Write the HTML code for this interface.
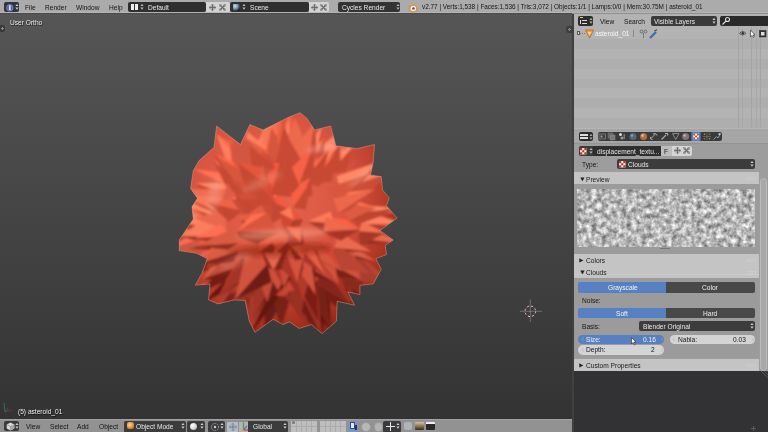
<!DOCTYPE html>
<html><head><meta charset="utf-8">
<style>
*{margin:0;padding:0;box-sizing:border-box}
html,body{width:768px;height:432px;overflow:hidden;background:#323234}
body{position:relative;font-family:"Liberation Sans",sans-serif;font-size:6.6px;color:#151515}
.a{position:absolute}
.t{position:absolute;white-space:nowrap;line-height:1;will-change:transform}
.dd{position:absolute;background:#3a3a3a;border-radius:2px}
.lt{color:#e6e6e6}
</style></head><body>

<!-- top info bar -->
<div class="a" style="left:0;top:0;width:768px;height:13px;background:#ababab"></div><div class="a" style="left:0;top:12px;width:768px;height:1px;background:#b6b6b6"></div>


<!-- ===== TOP BAR CONTENT ===== -->
<div class="a" style="left:4px;top:2px;width:15px;height:10px;background:#2e3340;border-radius:2px"></div>
<svg class="a" style="left:6px;top:3.5px" width="8" height="8"><circle cx="3.8" cy="3.8" r="3.3" fill="#5060a0" stroke="#8a9ad0" stroke-width=".7"/><rect x="2.9" y="1.3" width="1.8" height="5" fill="#d8e0f4"/></svg>
<svg class="a" style="left:15.0px;top:3.3px" width="4" height="8"><path d="M0.4 3 L2 0.9 L3.6 3Z M0.4 4.6 L2 6.7 L3.6 4.6Z" fill="#ccc"/></svg>
<div class="t" style="left:25px;top:5px">File</div>
<div class="t" style="left:45px;top:5px">Render</div>
<div class="t" style="left:75.5px;top:5px">Window</div>
<div class="t" style="left:108.5px;top:5px">Help</div>

<div class="dd" style="left:128px;top:2px;width:78px;height:10px;background:#2f2f2f"></div>
<div class="a" style="left:131px;top:4px;width:3px;height:6px;background:#eee"></div>
<div class="a" style="left:135px;top:4px;width:3px;height:3px;background:#eee"></div>
<div class="a" style="left:135px;top:7px;width:3px;height:3px;background:#eee"></div>
<svg class="a" style="left:139.5px;top:3.3px" width="4" height="8"><path d="M0.4 3 L2 0.9 L3.6 3Z M0.4 4.6 L2 6.7 L3.6 4.6Z" fill="#bbb"/></svg>
<div class="t lt" style="left:148px;top:5px">Default</div>
<div class="a" style="left:206px;top:2px;width:24px;height:10px;background:#d4d4d4;border-radius:0 2px 2px 0"></div>
<svg class="a" style="left:209px;top:4px" width="7" height="7"><path d="M3.5 0.5 L3.5 6.5 M0.5 3.5 L6.5 3.5" stroke="#6a6a6a" stroke-width="1.3"/><path d="M2.3 1.4 L3.5 0.2 L4.7 1.4 M2.3 5.6 L3.5 6.8 L4.7 5.6 M1.4 2.3 L0.2 3.5 L1.4 4.7 M5.6 2.3 L6.8 3.5 L5.6 4.7" stroke="#6a6a6a" stroke-width=".8" fill="none"/></svg>
<svg class="a" style="left:219px;top:4px" width="7" height="7"><path d="M1.5 1.5 L5.5 5.5 M5.5 1.5 L1.5 5.5" stroke="#6a6a6a" stroke-width="1.2"/><circle cx="1.3" cy="1.3" r="1" fill="none" stroke="#6a6a6a" stroke-width=".7"/><circle cx="5.7" cy="1.3" r="1" fill="none" stroke="#6a6a6a" stroke-width=".7"/><circle cx="1.3" cy="5.7" r="1" fill="none" stroke="#6a6a6a" stroke-width=".7"/><circle cx="5.7" cy="5.7" r="1" fill="none" stroke="#6a6a6a" stroke-width=".7"/></svg>

<div class="dd" style="left:230px;top:2px;width:79px;height:10px;background:#2f2f2f"></div>
<div class="a" style="left:233px;top:3.5px;width:7px;height:7px;background:radial-gradient(circle at 30% 30%,#cfe6ef,#5f8aa0 45%,#222 75%)"></div>
<svg class="a" style="left:241.5px;top:3.3px" width="4" height="8"><path d="M0.4 3 L2 0.9 L3.6 3Z M0.4 4.6 L2 6.7 L3.6 4.6Z" fill="#bbb"/></svg>
<div class="t lt" style="left:250px;top:5px">Scene</div>
<div class="a" style="left:309px;top:2px;width:20px;height:10px;background:#d4d4d4;border-radius:0 2px 2px 0"></div>
<svg class="a" style="left:311px;top:4px" width="7" height="7"><path d="M3.5 0.5 L3.5 6.5 M0.5 3.5 L6.5 3.5" stroke="#6a6a6a" stroke-width="1.3"/><path d="M2.3 1.4 L3.5 0.2 L4.7 1.4 M2.3 5.6 L3.5 6.8 L4.7 5.6 M1.4 2.3 L0.2 3.5 L1.4 4.7 M5.6 2.3 L6.8 3.5 L5.6 4.7" stroke="#6a6a6a" stroke-width=".8" fill="none"/></svg>
<svg class="a" style="left:319.5px;top:4px" width="7" height="7"><path d="M1.5 1.5 L5.5 5.5 M5.5 1.5 L1.5 5.5" stroke="#6a6a6a" stroke-width="1.2"/><circle cx="1.3" cy="1.3" r="1" fill="none" stroke="#6a6a6a" stroke-width=".7"/><circle cx="5.7" cy="1.3" r="1" fill="none" stroke="#6a6a6a" stroke-width=".7"/><circle cx="1.3" cy="5.7" r="1" fill="none" stroke="#6a6a6a" stroke-width=".7"/><circle cx="5.7" cy="5.7" r="1" fill="none" stroke="#6a6a6a" stroke-width=".7"/></svg>

<div class="dd" style="left:338px;top:2px;width:62px;height:10px;background:#333"></div>
<div class="t lt" style="left:341.5px;top:5px">Cycles Render</div>
<svg class="a" style="left:395.5px;top:3.3px" width="4" height="8"><path d="M0.4 3 L2 0.9 L3.6 3Z M0.4 4.6 L2 6.7 L3.6 4.6Z" fill="#bbb"/></svg>

<svg class="a" style="left:407px;top:2.5px" width="11" height="10"><path d="M1 3 L5 3 M1.5 5.5 L4 4.5 M2.5 8 L5 6" stroke="#e09040" stroke-width="1.1"/><circle cx="6.3" cy="5.5" r="3.4" fill="#f6f0e6" stroke="#e0903c" stroke-width="1.2"/><circle cx="6.5" cy="5.5" r="1.3" fill="#4a5a7a"/></svg>
<div class="t" style="left:422px;top:4px;font-size:6.4px;top:4.2px">v2.77 | Verts:1,538 | Faces:1,536 | Tris:3,072 | Objects:1/1 | Lamps:0/0 | Mem:30.75M | asteroid_01</div>

<!-- viewport -->
<div class="a" id="vp" style="left:0;top:13px;width:573px;height:406px;background:linear-gradient(#565656,#333333)"></div>
<div class="a" style="left:0;top:13px;width:573px;height:1px;background:#4a4a4a"></div>
<div class="a" style="left:572px;top:13px;width:2px;height:419px;background:#404040"></div>

<!-- viewport header -->
<div class="a" style="left:0;top:419px;width:572px;height:13px;background:#929292"></div><div class="a" style="left:0;top:419px;width:572px;height:1px;background:#a2a2a2"></div>

<!-- ===== VIEWPORT CONTENT ===== -->
<!-- AST --><svg class="a" style="left:0;top:0" width="573" height="419" viewBox="0 0 573 419">
<defs>
<radialGradient id="ag" cx="0.42" cy="0.36" r="0.72"><stop offset="0" stop-color="#e86850"/><stop offset="0.5" stop-color="#d85440"/><stop offset="0.78" stop-color="#b03624"/><stop offset="1" stop-color="#842012"/></radialGradient>
<clipPath id="ac"><polygon points="300.0,112.7 306.6,118.0 314.6,130.0 330.6,126.0 335.9,146.0 357.2,148.6 374.5,144.6 373.2,162.0 370.5,175.2 381.2,176.6 382.5,190.0 389.2,197.9 386.5,205.8 397.1,218.0 379.8,230.6 393.2,240.0 385.2,245.3 386.5,254.6 375.8,258.6 381.2,269.3 373.2,283.9 359.9,285.2 359.9,294.5 347.9,291.9 354.5,305.2 337.2,301.2 336.4,321.2 322.0,333.6 311.6,324.5 299.2,328.4 289.5,321.9 283.0,324.5 273.2,319.3 255.0,332.3 249.1,320.6 245.2,300.4 233.9,299.9 217.9,303.9 208.6,299.9 210.0,283.9 195.3,285.2 202.0,273.2 207.3,258.6 196.6,253.3 179.3,250.6 179.3,240.0 193.3,219.2 192.0,206.7 197.5,198.3 190.6,188.6 193.3,170.6 198.9,160.8 214.0,147.3 216.6,126.0 240.5,144.6 249.9,124.6 263.2,130.0 287.0,118.0"/></clipPath>
<filter id="bl" x="-5%" y="-5%" width="110%" height="110%"><feGaussianBlur stdDeviation="0.9"/></filter><filter id="bl2" x="-20%" y="-20%" width="140%" height="140%"><feGaussianBlur stdDeviation="2.5"/></filter>
</defs>
<polygon points="300.0,112.7 306.6,118.0 314.6,130.0 330.6,126.0 335.9,146.0 357.2,148.6 374.5,144.6 373.2,162.0 370.5,175.2 381.2,176.6 382.5,190.0 389.2,197.9 386.5,205.8 397.1,218.0 379.8,230.6 393.2,240.0 385.2,245.3 386.5,254.6 375.8,258.6 381.2,269.3 373.2,283.9 359.9,285.2 359.9,294.5 347.9,291.9 354.5,305.2 337.2,301.2 336.4,321.2 322.0,333.6 311.6,324.5 299.2,328.4 289.5,321.9 283.0,324.5 273.2,319.3 255.0,332.3 249.1,320.6 245.2,300.4 233.9,299.9 217.9,303.9 208.6,299.9 210.0,283.9 195.3,285.2 202.0,273.2 207.3,258.6 196.6,253.3 179.3,250.6 179.3,240.0 193.3,219.2 192.0,206.7 197.5,198.3 190.6,188.6 193.3,170.6 198.9,160.8 214.0,147.3 216.6,126.0 240.5,144.6 249.9,124.6 263.2,130.0 287.0,118.0" fill="url(#ag)"/>
<g clip-path="url(#ac)"><g filter="url(#bl)">
<polygon points="168.9,200.8 210.2,216.4 212.2,218.2" fill="#c44630"/>
<polygon points="289.6,112.2 289.4,146.3 277.9,148.8" fill="#ff7253"/>
<polygon points="320.7,318.2 302.4,297.5 306.4,299.1" fill="#63160f"/>
<polygon points="320.7,318.2 325.6,292.3 326.5,289.0" fill="#63160f"/>
<polygon points="289.6,112.2 304.4,148.7 289.4,146.3" fill="#ed6044"/>
<polygon points="185.9,240.4 212.8,247.6 215.8,253.6" fill="#962e20"/>
<polygon points="272.9,97.7 276.1,148.2 269.1,150.0" fill="#fd6649"/>
<polygon points="185.9,240.4 209.4,218.6 210.0,227.6" fill="#ff7456"/>
<polygon points="290.2,120.9 298.6,148.8 288.0,147.5" fill="#db543c"/>
<polygon points="168.9,200.8 214.9,199.3 210.2,216.4" fill="#ff8c69"/>
<polygon points="201.9,303.6 229.6,275.3 239.6,283.7" fill="#691911"/>
<polygon points="201.9,303.6 222.9,265.9 229.6,275.3" fill="#b93b2b"/>
<polygon points="392.1,172.1 355.3,188.5 348.2,176.7" fill="#ff8967"/>
<polygon points="392.1,172.1 360.4,201.1 355.3,188.5" fill="#c94a34"/>
<polygon points="272.9,97.7 288.3,147.4 276.1,148.2" fill="#f26b4e"/>
<polygon points="290.2,120.9 288.0,147.5 278.6,147.8" fill="#ff8664"/>
<polygon points="354.6,141.7 339.9,169.5 336.1,165.6" fill="#c74832"/>
<polygon points="268.4,106.7 265.2,150.4 258.7,151.7" fill="#ff694b"/>
<polygon points="361.7,327.2 323.0,293.6 345.5,276.5" fill="#6d1c14"/>
<polygon points="264.9,332.9 264.1,296.7 265.2,297.3" fill="#7f1d14"/>
<polygon points="273.9,117.4 291.7,146.9 288.9,147.2" fill="#d94f37"/>
<polygon points="163.6,232.6 210.3,219.1 211.4,236.8" fill="#ec7154"/>
<polygon points="185.9,240.4 210.0,227.6 212.8,247.6" fill="#e5654b"/>
<polygon points="264.5,126.8 283.1,146.8 266.7,149.7" fill="#ff7556"/>
<polygon points="354.6,141.7 336.1,165.6 328.8,160.1" fill="#ff8966"/>
<polygon points="264.5,126.8 266.7,149.7 253.1,153.8" fill="#ff805f"/>
<polygon points="251.2,322.9 262.0,296.5 280.1,302.2" fill="#63160f"/>
<polygon points="190.1,194.6 213.5,200.9 209.8,216.7" fill="#d14f38"/>
<polygon points="216.4,134.1 250.4,156.3 242.3,161.7" fill="#ff6a4c"/>
<polygon points="190.1,194.6 218.5,188.0 213.5,200.9" fill="#ff8a67"/>
<polygon points="268.4,106.7 291.2,146.4 281.9,147.7" fill="#f3684c"/>
<polygon points="351.0,119.4 321.8,155.8 315.1,152.2" fill="#ff7c5b"/>
<polygon points="394.4,220.8 363.2,230.1 362.7,214.2" fill="#c24c36"/>
<polygon points="320.7,318.2 306.4,299.1 325.6,292.3" fill="#631710"/>
<polygon points="268.4,106.7 281.9,147.7 265.2,150.4" fill="#ff8363"/>
<polygon points="264.9,332.9 265.2,297.3 282.2,300.6" fill="#691b13"/>
<polygon points="351.0,119.4 339.5,166.9 321.8,155.8" fill="#da583f"/>
<polygon points="273.9,117.4 276.6,148.6 264.8,150.2" fill="#ff6c4e"/>
<polygon points="251.2,322.9 244.8,290.2 262.0,296.5" fill="#6c1b13"/>
<polygon points="216.4,134.1 242.3,161.7 230.1,171.5" fill="#ff7e5e"/>
<polygon points="193.3,295.6 220.3,261.9 225.0,267.9" fill="#c94734"/>
<polygon points="193.3,295.6 225.0,267.9 232.7,278.0" fill="#721d14"/>
<polygon points="350.8,128.8 337.3,166.4 322.3,156.4" fill="#f06f52"/>
<polygon points="273.9,117.4 288.9,147.2 276.6,148.6" fill="#f26448"/>
<polygon points="262.1,124.8 276.6,147.9 275.1,149.7" fill="#d84e36"/>
<polygon points="408.2,244.4 360.6,243.9 360.8,238.4" fill="#9c3122"/>
<polygon points="247.2,130.8 259.8,154.2 247.2,158.5" fill="#f66649"/>
<polygon points="408.2,244.4 360.8,238.4 363.2,226.8" fill="#ea6b50"/>
<polygon points="188.2,211.5 212.5,222.0 209.6,227.0" fill="#b8402c"/>
<polygon points="295.4,118.2 308.3,149.7 281.7,148.3" fill="#ee674b"/>
<polygon points="358.2,322.5 334.9,281.0 336.3,283.1" fill="#6b1810"/>
<polygon points="261.4,111.6 279.8,147.5 279.9,149.4" fill="#cf4b34"/>
<polygon points="194.5,184.0 220.4,187.2 218.5,195.3" fill="#ff7d5c"/>
<polygon points="368.8,298.9 349.8,264.9 354.0,263.5" fill="#822217"/>
<polygon points="353.5,146.4 334.5,167.6 325.2,156.5" fill="#ff8967"/>
<polygon points="321.9,126.5 320.2,154.8 315.9,156.1" fill="#c74832"/>
<polygon points="194.5,184.0 218.5,195.3 213.7,203.5" fill="#c94b35"/>
<polygon points="353.5,146.4 345.6,174.2 334.5,167.6" fill="#c84832"/>
<polygon points="188.2,211.5 214.1,196.3 215.2,202.7" fill="#ff7f5d"/>
<polygon points="368.8,298.9 329.6,289.7 336.5,279.4" fill="#681811"/>
<polygon points="247.2,130.8 267.2,150.6 259.8,154.2" fill="#ff7c5c"/>
<polygon points="410.4,225.2 362.3,234.9 361.2,223.7" fill="#af3c2a"/>
<polygon points="410.4,225.2 361.2,223.7 362.5,210.8" fill="#ff8060"/>
<polygon points="262.1,124.8 275.1,149.7 262.4,153.5" fill="#fc795a"/>
<polygon points="247.1,132.1 246.3,162.7 240.1,160.6" fill="#fa5e43"/>
<polygon points="358.2,322.5 321.1,292.1 334.9,281.0" fill="#82251b"/>
<polygon points="346.5,307.3 319.5,293.3 335.6,279.6" fill="#782017"/>
<polygon points="280.8,328.5 290.7,297.2 289.7,300.7" fill="#63160f"/>
<polygon points="221.1,314.8 245.7,284.4 255.3,294.6" fill="#63160f"/>
<polygon points="343.0,129.1 325.6,161.3 317.8,154.9" fill="#ff8665"/>
<polygon points="343.0,129.1 335.1,165.4 325.6,161.3" fill="#c94b35"/>
<polygon points="261.4,111.6 279.9,149.4 264.0,153.0" fill="#f67759"/>
<polygon points="321.9,126.5 315.9,156.1 302.8,150.4" fill="#ff8565"/>
<polygon points="172.4,222.1 213.5,227.3 211.7,239.5" fill="#ad3b29"/>
<polygon points="170.8,245.9 216.0,240.6 215.2,251.4" fill="#982f20"/>
<polygon points="275.0,121.7 289.3,148.7 270.9,151.9" fill="#f37053"/>
<polygon points="192.2,261.6 215.5,242.8 222.6,263.8" fill="#9f3728"/>
<polygon points="172.4,222.1 212.6,203.1 213.5,227.3" fill="#ff8464"/>
<polygon points="188.2,211.5 215.2,202.7 212.5,222.0" fill="#f27052"/>
<polygon points="367.4,318.8 330.1,285.2 335.8,279.4" fill="#792017"/>
<polygon points="367.4,318.8 335.8,279.4 343.1,274.1" fill="#962e22"/>
<polygon points="221.1,314.8 230.7,275.5 245.7,284.4" fill="#a73628"/>
<polygon points="368.8,298.9 336.5,279.4 349.8,264.9" fill="#892b1f"/>
<polygon points="385.3,233.0 359.9,246.1 359.1,231.3" fill="#a53726"/>
<polygon points="170.8,245.9 211.2,225.0 216.0,240.6" fill="#f8775a"/>
<polygon points="211.5,318.9 251.2,287.7 251.5,292.8" fill="#63160f"/>
<polygon points="385.3,233.0 359.1,231.3 361.7,220.9" fill="#f47154"/>
<polygon points="247.1,132.1 271.1,150.4 246.3,162.7" fill="#ff8262"/>
<polygon points="194.2,169.1 228.7,173.8 226.8,185.8" fill="#ff7555"/>
<polygon points="167.3,250.5 209.7,226.6 215.9,233.1" fill="#fd694d"/>
<polygon points="180.7,236.2 218.2,236.1 212.6,245.5" fill="#a03323"/>
<polygon points="394.3,284.9 353.9,249.4 359.3,252.7" fill="#a93022"/>
<polygon points="280.8,328.5 271.5,295.4 290.7,297.2" fill="#782118"/>
<polygon points="229.4,139.3 241.0,169.7 232.7,169.9" fill="#da5139"/>
<polygon points="211.5,318.9 229.2,272.3 240.2,278.2" fill="#b23b2c"/>
<polygon points="330.7,329.3 324.6,284.2 329.3,287.5" fill="#63160f"/>
<polygon points="213.9,153.3 239.9,164.9 238.2,173.7" fill="#ff6649"/>
<polygon points="325.2,344.4 299.7,297.1 318.7,289.4" fill="#972f22"/>
<polygon points="172.6,274.0 223.7,258.1 226.4,268.8" fill="#812419"/>
<polygon points="213.9,153.3 238.2,173.7 224.2,181.7" fill="#cc4d37"/>
<polygon points="194.2,169.1 226.8,185.8 219.1,196.0" fill="#dc5c42"/>
<polygon points="192.0,208.4 218.2,217.3 210.8,219.8" fill="#bf432f"/>
<polygon points="196.2,182.9 224.5,193.2 213.8,205.6" fill="#c94a34"/>
<polygon points="330.7,329.3 297.7,300.0 306.4,291.1" fill="#63160f"/>
<polygon points="323.8,339.6 293.2,302.0 296.2,294.1" fill="#63160f"/>
<polygon points="373.1,273.5 349.9,252.3 357.8,249.7" fill="#ac3425"/>
<polygon points="175.4,189.3 218.0,213.0 211.2,210.0" fill="#c74832"/>
<polygon points="211.5,318.9 240.2,278.2 251.2,287.7" fill="#7e241a"/>
<polygon points="202.0,280.8 230.0,263.7 234.0,276.5" fill="#781f16"/>
<polygon points="172.6,274.0 216.5,242.3 223.7,258.1" fill="#c4503b"/>
<polygon points="180.7,236.2 212.8,212.1 218.2,236.1" fill="#f97d5e"/>
<polygon points="202.0,280.8 218.7,251.7 230.0,263.7" fill="#d25640"/>
<polygon points="355.6,319.8 330.5,277.1 341.2,276.4" fill="#791d14"/>
<polygon points="167.3,250.5 215.9,233.1 220.7,254.4" fill="#cd5740"/>
<polygon points="196.2,182.9 226.4,183.3 224.5,193.2" fill="#ff8766"/>
<polygon points="276.9,126.5 288.4,149.9 286.8,154.8" fill="#ca4933"/>
<polygon points="192.0,208.4 217.8,201.2 218.2,217.3" fill="#ff8564"/>
<polygon points="354.9,304.4 335.2,273.4 341.1,275.1" fill="#852117"/>
<polygon points="373.1,273.5 341.0,273.5 349.9,252.3" fill="#84281c"/>
<polygon points="229.4,139.3 259.0,158.8 241.0,169.7" fill="#ef6e51"/>
<polygon points="306.9,323.5 309.6,289.0 315.7,293.0" fill="#63160f"/>
<polygon points="394.3,284.9 340.2,273.7 353.9,249.4" fill="#b44533"/>
<polygon points="355.6,319.8 315.6,292.1 330.5,277.1" fill="#761f16"/>
<polygon points="276.9,126.5 276.1,156.0 266.7,154.7" fill="#f87153"/>
<polygon points="323.8,339.6 313.5,286.9 323.0,289.1" fill="#651710"/>
<polygon points="213.1,160.5 238.5,169.2 234.9,180.9" fill="#fc6c4e"/>
<polygon points="213.1,160.5 234.9,180.9 225.3,185.2" fill="#c94a34"/>
<polygon points="393.2,212.2 361.1,223.1 354.0,217.5" fill="#bc412d"/>
<polygon points="330.7,329.3 306.4,291.1 324.6,284.2" fill="#762017"/>
<polygon points="177.8,272.2 214.8,243.0 225.2,251.3" fill="#e96047"/>
<polygon points="171.6,193.1 220.1,211.6 214.0,212.8" fill="#c74832"/>
<polygon points="354.9,304.4 322.9,286.1 335.2,273.4" fill="#9a3225"/>
<polygon points="300.8,317.3 287.1,297.4 288.6,291.5" fill="#6a1810"/>
<polygon points="306.9,323.5 283.8,295.7 309.6,289.0" fill="#952f22"/>
<polygon points="276.9,126.5 286.8,154.8 276.1,156.0" fill="#ee6e51"/>
<polygon points="393.2,212.2 354.0,217.5 357.2,202.1" fill="#ff8d6b"/>
<polygon points="381.8,284.3 335.7,276.8 353.2,247.5" fill="#a93d2d"/>
<polygon points="175.4,189.3 225.8,189.1 218.0,213.0" fill="#ee6d51"/>
<polygon points="177.8,272.2 225.2,251.3 226.4,262.4" fill="#85261a"/>
<polygon points="320.8,334.3 318.0,284.2 318.8,293.0" fill="#63160f"/>
<polygon points="323.8,339.6 296.2,294.1 313.5,286.9" fill="#8e2b1f"/>
<polygon points="249.2,335.5 271.4,288.5 278.2,297.3" fill="#63160f"/>
<polygon points="400.4,207.7 352.4,213.8 355.7,204.8" fill="#ff8866"/>
<polygon points="171.6,193.1 222.6,197.8 220.1,211.6" fill="#f87859"/>
<polygon points="400.4,207.7 358.3,224.2 352.4,213.8" fill="#bf442f"/>
<polygon points="320.8,334.3 292.7,299.9 298.7,288.4" fill="#731b13"/>
<polygon points="300.8,317.3 288.6,291.5 306.0,289.1" fill="#993124"/>
<polygon points="235.1,131.0 269.1,151.7 256.4,167.9" fill="#eb6146"/>
<polygon points="249.2,335.5 248.8,285.1 271.4,288.5" fill="#aa382a"/>
<polygon points="230.9,143.1 250.0,171.8 241.9,168.6" fill="#c74832"/>
<polygon points="315.7,316.3 300.8,293.0 299.5,288.7" fill="#63160f"/>
<polygon points="318.0,322.7 311.3,284.4 318.8,288.7" fill="#691811"/>
<polygon points="280.4,122.5 287.0,152.2 287.1,160.2" fill="#c74832"/>
<polygon points="230.9,143.1 255.4,161.5 250.0,171.8" fill="#eb5e43"/>
<polygon points="205.4,268.5 235.0,261.8 228.9,265.3" fill="#812419"/>
<polygon points="280.4,122.5 287.1,160.2 271.8,155.1" fill="#ea6045"/>
<polygon points="383.9,174.4 339.0,190.2 344.3,178.4" fill="#ff805e"/>
<polygon points="230.9,294.7 259.0,277.4 247.1,286.0" fill="#6b1912"/>
<polygon points="230.9,294.7 236.1,274.7 241.7,265.5" fill="#aa2e20"/>
<polygon points="315.7,316.3 299.5,288.7 312.0,284.9" fill="#a33628"/>
<polygon points="235.1,131.0 256.4,167.9 237.2,174.8" fill="#ea674b"/>
<polygon points="340.2,142.7 340.6,173.0 318.3,173.1" fill="#c84832"/>
<polygon points="340.2,142.7 318.3,173.1 312.6,156.4" fill="#ff805f"/>
<polygon points="205.4,268.5 222.3,247.9 229.6,248.4" fill="#e6573f"/>
<polygon points="320.8,334.3 298.7,288.4 318.0,284.2" fill="#9e3325"/>
<polygon points="229.6,123.4 269.0,160.6 236.0,175.2" fill="#d5573f"/>
<polygon points="383.9,174.4 354.9,208.8 339.0,190.2" fill="#cb4e37"/>
<polygon points="318.0,322.7 296.4,288.0 311.3,284.4" fill="#9e3326"/>
<polygon points="253.3,319.8 271.6,283.3 269.5,292.8" fill="#63160f"/>
<polygon points="205.8,277.7 242.2,265.4 236.8,274.0" fill="#792016"/>
<polygon points="376.2,207.9 355.9,220.4 348.4,220.9" fill="#bd422e"/>
<polygon points="205.8,277.7 222.8,247.4 232.1,252.2" fill="#e36148"/>
<polygon points="380.3,161.0 350.5,195.4 342.9,197.5" fill="#c74832"/>
<polygon points="205.4,268.5 229.6,248.4 235.0,261.8" fill="#a33a2a"/>
<polygon points="376.2,207.9 341.9,202.4 353.8,200.0" fill="#ff7050"/>
<polygon points="188.9,249.1 228.6,244.9 224.2,250.7" fill="#952d1f"/>
<polygon points="380.3,161.0 342.9,197.5 336.5,176.2" fill="#ff8765"/>
<polygon points="376.6,261.4 345.6,243.2 352.8,244.8" fill="#ce432f"/>
<polygon points="376.6,261.4 347.1,257.3 341.6,251.8" fill="#8b281c"/>
<polygon points="188.9,249.1 219.2,230.7 227.6,231.8" fill="#fb6348"/>
<polygon points="194.9,238.0 232.1,235.9 219.1,244.8" fill="#a03323"/>
<polygon points="228.6,312.3 243.8,270.3 265.4,286.7" fill="#983023"/>
<polygon points="193.5,217.9 225.5,209.4 226.1,229.8" fill="#e8684d"/>
<polygon points="230.9,294.7 241.7,265.5 259.0,277.4" fill="#ac3f2e"/>
<polygon points="205.8,277.7 232.1,252.2 242.2,265.4" fill="#c14e3a"/>
<polygon points="253.3,319.8 255.8,278.5 271.6,283.3" fill="#a23527"/>
<polygon points="324.4,138.1 308.9,170.4 301.5,159.4" fill="#ff7656"/>
<polygon points="324.4,138.1 324.8,169.8 308.9,170.4" fill="#c84933"/>
<polygon points="350.4,305.0 323.4,268.0 339.1,266.9" fill="#a23123"/>
<polygon points="194.9,238.0 220.2,224.1 232.1,235.9" fill="#fb6f53"/>
<polygon points="376.6,261.4 341.6,251.8 345.6,243.2" fill="#dc6149"/>
<polygon points="188.9,249.1 227.6,231.8 228.6,244.9" fill="#a73c2b"/>
<polygon points="376.2,207.9 348.4,220.9 341.9,202.4" fill="#dc5c43"/>
<polygon points="350.4,305.0 315.4,284.1 323.4,268.0" fill="#85251a"/>
<polygon points="271.3,127.4 287.9,156.3 288.1,166.2" fill="#ca4933"/>
<polygon points="196.0,264.4 221.4,237.0 228.9,236.6" fill="#f15d44"/>
<polygon points="271.3,127.4 264.5,171.8 263.1,161.0" fill="#f75c40"/>
<polygon points="196.0,264.4 238.4,251.0 233.0,262.5" fill="#88271b"/>
<polygon points="217.7,297.4 254.0,270.6 246.2,278.8" fill="#6f1b13"/>
<polygon points="360.9,280.0 330.4,276.1 322.5,259.3" fill="#7a2016"/>
<polygon points="283.2,122.1 274.1,169.1 271.1,157.4" fill="#f65d41"/>
<polygon points="360.9,280.0 322.5,259.3 351.9,244.5" fill="#d0533d"/>
<polygon points="217.7,297.4 233.9,265.9 242.4,257.2" fill="#bd3727"/>
<polygon points="283.4,130.0 273.6,172.6 277.7,152.4" fill="#fa5c40"/>
<polygon points="318.1,321.9 302.8,275.5 317.7,282.4" fill="#801f16"/>
<polygon points="318.1,321.9 300.1,287.7 302.8,275.5" fill="#7b1c14"/>
<polygon points="196.0,246.1 221.5,233.6 232.8,228.9" fill="#f7573e"/>
<polygon points="315.1,122.1 317.4,164.7 304.8,175.1" fill="#c74832"/>
<polygon points="196.0,264.4 228.9,236.6 238.4,251.0" fill="#d85d45"/>
<polygon points="271.3,127.4 288.1,166.2 264.5,171.8" fill="#d4573e"/>
<polygon points="215.3,156.0 243.6,170.0 257.1,178.9" fill="#fe5e42"/>
<polygon points="283.2,122.1 297.1,162.5 286.0,170.3" fill="#c84933"/>
<polygon points="196.0,246.1 238.9,242.9 228.1,249.8" fill="#972e20"/>
<polygon points="371.4,251.6 341.8,251.8 333.6,247.6" fill="#932c1f"/>
<polygon points="217.7,297.4 242.4,257.2 254.0,270.6" fill="#a23628"/>
<polygon points="374.8,189.4 349.1,210.0 338.5,212.7" fill="#c74832"/>
<polygon points="374.8,189.4 333.0,198.8 341.2,192.5" fill="#ff7958"/>
<polygon points="315.1,122.1 304.8,175.1 281.1,162.5" fill="#ee694d"/>
<polygon points="267.3,302.2 275.8,269.8 286.9,284.4" fill="#6f1c14"/>
<polygon points="370.8,273.7 328.1,267.2 336.4,241.3" fill="#b94532"/>
<polygon points="336.0,152.1 312.7,184.1 316.6,170.1" fill="#ff6e4e"/>
<polygon points="283.2,122.1 286.0,170.3 274.1,169.1" fill="#d5563e"/>
<polygon points="319.2,154.6 299.0,174.8 303.1,168.6" fill="#ff6e4e"/>
<polygon points="336.0,152.1 331.7,181.6 312.7,184.1" fill="#c74832"/>
<polygon points="283.4,130.0 304.8,165.8 273.6,172.6" fill="#c94a34"/>
<polygon points="262.3,150.4 281.0,166.3 275.0,180.2" fill="#d14e37"/>
<polygon points="366.8,174.3 338.2,203.1 326.7,188.2" fill="#d8573e"/>
<polygon points="215.3,156.0 247.3,195.8 232.1,191.3" fill="#c74832"/>
<polygon points="262.3,150.4 275.0,180.2 257.2,177.0" fill="#d4523b"/>
<polygon points="267.3,302.2 255.5,271.0 275.8,269.8" fill="#c24a37"/>
<polygon points="371.4,251.6 333.6,247.6 340.2,233.0" fill="#e96b50"/>
<polygon points="196.0,246.1 232.8,228.9 238.9,242.9" fill="#d95b43"/>
<polygon points="319.2,154.6 319.9,178.7 307.8,182.3" fill="#c74832"/>
<polygon points="249.2,146.3 262.5,184.1 252.5,171.9" fill="#c94933"/>
<polygon points="278.1,290.6 288.2,267.9 283.7,282.8" fill="#711c13"/>
<polygon points="374.8,189.4 338.5,212.7 333.0,198.8" fill="#ed674b"/>
<polygon points="208.0,202.6 242.5,211.1 229.0,221.8" fill="#c44630"/>
<polygon points="319.2,154.6 307.8,182.3 299.0,174.8" fill="#e86146"/>
<polygon points="263.0,165.1 278.8,163.2 287.6,178.5" fill="#f75f44"/>
<polygon points="312.9,146.5 315.0,166.4 315.0,179.8" fill="#c74832"/>
<polygon points="249.2,146.3 276.7,167.5 262.5,184.1" fill="#c94a34"/>
<polygon points="230.9,198.9 245.5,219.8 233.6,204.0" fill="#c74832"/>
<polygon points="263.0,165.1 250.9,194.5 254.9,176.6" fill="#ff6346"/>
<polygon points="278.1,290.6 266.8,271.2 288.2,267.9" fill="#cf503b"/>
<polygon points="215.3,156.0 257.1,178.9 247.3,195.8" fill="#d7563e"/>
<polygon points="208.0,202.6 241.6,197.1 242.5,211.1" fill="#ed6448"/>
<polygon points="230.9,198.9 243.0,190.6 258.2,200.2" fill="#ff7655"/>
<polygon points="329.1,149.0 321.7,179.9 319.6,186.6" fill="#c74832"/>
<polygon points="235.0,299.6 267.4,263.4 271.6,282.0" fill="#701c13"/>
<polygon points="339.1,285.0 315.6,276.5 305.5,265.6" fill="#761e15"/>
<polygon points="235.0,299.6 244.5,259.5 267.4,263.4" fill="#d2523d"/>
<polygon points="329.1,149.0 303.6,182.5 302.5,173.9" fill="#ff6e4f"/>
<polygon points="302.8,301.6 286.5,278.5 293.2,263.0" fill="#9f2d20"/>
<polygon points="226.3,177.2 252.6,198.2 240.8,202.4" fill="#c74832"/>
<polygon points="283.7,287.3 294.4,263.4 297.8,270.2" fill="#792016"/>
<polygon points="349.6,231.2 329.9,242.0 327.0,216.6" fill="#d14f39"/>
<polygon points="230.9,198.9 258.2,200.2 245.5,219.8" fill="#cb4e37"/>
<polygon points="329.1,149.0 319.6,186.6 303.6,182.5" fill="#c84933"/>
<polygon points="226.3,177.2 253.8,187.9 252.6,198.2" fill="#d35038"/>
<polygon points="237.5,162.4 251.0,200.2 243.8,183.5" fill="#ca4933"/>
<polygon points="312.9,146.5 298.3,186.7 291.4,168.2" fill="#f76246"/>
<polygon points="283.7,287.3 273.1,268.8 278.1,260.5" fill="#b33828"/>
<polygon points="237.5,162.4 264.7,167.9 269.4,187.0" fill="#e5563c"/>
<polygon points="360.3,229.3 325.4,216.9 345.3,219.3" fill="#ff6044"/>
<polygon points="302.8,301.6 293.2,263.0 312.3,267.9" fill="#b03b2b"/>
<polygon points="263.0,165.1 287.6,178.5 268.1,197.9" fill="#cb4f38"/>
<polygon points="312.9,146.5 315.0,179.8 298.3,186.7" fill="#c74832"/>
<polygon points="339.1,285.0 313.4,251.6 331.3,249.3" fill="#d2523c"/>
<polygon points="263.0,165.1 268.1,197.9 250.9,194.5" fill="#e05d43"/>
<polygon points="360.3,229.3 340.6,240.8 323.7,231.2" fill="#a73626"/>
<polygon points="283.7,287.3 278.1,260.5 294.4,263.4" fill="#c94e3a"/>
<polygon points="273.6,269.7 266.9,267.3 261.0,247.3" fill="#8d281c"/>
<polygon points="342.9,271.4 324.2,262.8 312.8,256.4" fill="#832519"/>
<polygon points="339.1,285.0 305.5,265.6 313.4,251.6" fill="#bd4533"/>
<polygon points="315.9,295.2 310.8,258.9 314.6,267.2" fill="#781f16"/>
<polygon points="342.9,271.4 319.2,245.5 330.0,247.3" fill="#d14834"/>
<polygon points="333.7,223.2 331.5,237.5 307.5,221.2" fill="#af3b29"/>
<polygon points="273.6,269.7 286.4,243.6 289.4,270.1" fill="#86261a"/>
<polygon points="333.7,223.2 307.5,221.2 330.7,211.2" fill="#ff7959"/>
<polygon points="315.9,295.2 295.8,266.3 310.8,258.9" fill="#d3523d"/>
<polygon points="237.5,162.4 269.4,187.0 251.0,200.2" fill="#c84933"/>
<polygon points="287.6,157.9 277.4,187.0 279.8,176.9" fill="#ff5f42"/>
<polygon points="297.2,283.2 303.9,254.8 302.8,269.7" fill="#7d2217"/>
<polygon points="360.3,229.3 323.7,231.2 325.4,216.9" fill="#ef694e"/>
<polygon points="310.9,177.4 299.1,200.0 294.8,186.0" fill="#f56246"/>
<polygon points="310.9,177.4 312.6,195.2 299.1,200.0" fill="#c74832"/>
<polygon points="342.9,271.4 312.8,256.4 319.2,245.5" fill="#d6543e"/>
<polygon points="240.1,219.9 244.1,215.0 262.2,203.9" fill="#ff6c4d"/>
<polygon points="273.6,269.7 261.0,247.3 286.4,243.6" fill="#e7694f"/>
<polygon points="297.2,283.2 281.4,268.9 286.2,252.8" fill="#ad3425"/>
<polygon points="244.4,199.8 251.6,198.5 264.3,198.3" fill="#ff6c4d"/>
<polygon points="279.5,163.5 271.3,194.8 267.6,174.1" fill="#ee583e"/>
<polygon points="272.1,201.4 254.7,207.2 279.1,192.1" fill="#ff7454"/>
<polygon points="233.5,193.9 261.2,211.7 245.8,214.6" fill="#c74832"/>
<polygon points="287.6,157.9 299.4,185.4 293.7,192.1" fill="#c74832"/>
<polygon points="287.6,157.9 293.7,192.1 277.4,187.0" fill="#c84933"/>
<polygon points="233.5,193.9 262.0,195.1 261.2,211.7" fill="#d35038"/>
<polygon points="240.1,219.9 270.1,228.8 250.4,232.0" fill="#b03b29"/>
<polygon points="297.2,283.2 286.2,252.8 303.9,254.8" fill="#d3523c"/>
<polygon points="257.8,252.4 273.7,253.1 256.3,252.6" fill="#902b1e"/>
<polygon points="257.8,252.4 256.3,252.6 259.8,235.9" fill="#c53e2b"/>
<polygon points="326.6,276.7 312.7,248.0 317.4,251.6" fill="#af3525"/>
<polygon points="326.6,276.7 303.8,261.2 305.1,253.0" fill="#ad3526"/>
<polygon points="272.1,201.4 271.2,224.2 254.7,207.2" fill="#cd4c35"/>
<polygon points="272.1,201.4 279.1,192.1 291.1,210.7" fill="#ef5b40"/>
<polygon points="256.7,177.8 271.0,183.7 273.2,200.5" fill="#c84832"/>
<polygon points="244.4,199.8 263.1,214.9 252.1,217.9" fill="#c54631"/>
<polygon points="244.4,199.8 264.3,198.3 263.1,214.9" fill="#c84933"/>
<polygon points="240.1,219.9 262.2,203.9 270.1,228.8" fill="#e25b42"/>
<polygon points="279.5,163.5 298.0,181.9 291.6,196.9" fill="#c74832"/>
<polygon points="303.2,258.8 309.1,239.7 304.5,257.5" fill="#912b1e"/>
<polygon points="326.6,276.7 305.1,253.0 312.7,248.0" fill="#e45e45"/>
<polygon points="256.7,177.8 273.2,200.5 261.2,198.0" fill="#c74832"/>
<polygon points="303.2,258.8 295.3,260.5 287.7,243.3" fill="#8e2a1d"/>
<polygon points="237.3,231.6 257.0,244.0 239.2,237.4" fill="#a23424"/>
<polygon points="272.1,201.4 291.1,210.7 271.2,224.2" fill="#c34630"/>
<polygon points="255.9,181.7 267.3,179.5 277.4,206.3" fill="#d54d36"/>
<polygon points="279.5,163.5 291.6,196.9 271.3,194.8" fill="#c84832"/>
<polygon points="308.4,185.2 308.5,195.3 305.8,209.4" fill="#c74832"/>
<polygon points="257.8,252.4 278.4,238.3 273.7,253.1" fill="#952d20"/>
<polygon points="257.8,252.4 259.8,235.9 278.4,238.3" fill="#f26147"/>
<polygon points="277.7,250.5 288.9,250.5 278.8,253.1" fill="#912b1e"/>
<polygon points="277.7,250.5 278.8,253.1 269.3,239.4" fill="#962e20"/>
<polygon points="303.2,258.8 297.2,236.2 309.1,239.7" fill="#e0563e"/>
<polygon points="303.2,258.8 287.7,243.3 297.2,236.2" fill="#f0674c"/>
<polygon points="308.4,185.2 292.7,207.9 291.4,193.6" fill="#f86145"/>
<polygon points="255.9,181.7 277.4,206.3 256.3,205.4" fill="#c74832"/>
<polygon points="277.7,250.5 293.1,237.0 288.9,250.5" fill="#982f20"/>
<polygon points="277.7,250.5 269.3,239.4 277.0,229.9" fill="#ee5a41"/>
<polygon points="308.4,185.2 305.8,209.4 292.7,207.9" fill="#c74832"/>
<polygon points="237.3,231.6 250.8,214.9 267.7,212.4" fill="#ff7051"/>
<polygon points="277.7,250.5 277.0,229.9 293.1,237.0" fill="#e75941"/>
<polygon points="300.6,242.4 304.5,243.9 289.8,247.3" fill="#9a3021"/>
<polygon points="237.3,231.6 277.9,232.9 257.0,244.0" fill="#a43525"/>
<polygon points="293.6,219.9 290.5,207.0 303.0,219.1" fill="#e7543b"/>
<polygon points="293.6,219.9 303.0,219.1 298.0,230.2" fill="#b53e2b"/>
<polygon points="300.6,242.4 300.8,227.6 304.5,243.9" fill="#a23424"/>
<polygon points="293.6,219.9 279.4,212.7 290.5,207.0" fill="#ff7958"/>
<polygon points="293.6,219.9 298.0,230.2 284.8,234.8" fill="#ae3a28"/>
<polygon points="293.6,219.9 284.8,234.8 279.4,212.7" fill="#ce4832"/>
<polygon points="300.6,242.4 289.8,247.3 285.6,226.8" fill="#b63b29"/>
<polygon points="300.6,242.4 285.6,226.8 300.8,227.6" fill="#fa6348"/>
<polygon points="237.3,231.6 267.7,212.4 277.9,232.9" fill="#d9543c"/>
</g>
<g filter="url(#bl2)">
<ellipse cx="282" cy="234" rx="46" ry="5" transform="rotate(-3 282 234)" fill="#f4a890" opacity="0.5"/>
<ellipse cx="262" cy="182" rx="22" ry="5" transform="rotate(-25 262 182)" fill="#f4a890" opacity="0.28"/>
<ellipse cx="322" cy="148" rx="16" ry="4" transform="rotate(-10 322 148)" fill="#f8c0b0" opacity="0.35"/>
<ellipse cx="214" cy="196" rx="6" ry="18" transform="rotate(10 214 196)" fill="#f6b0a0" opacity="0.3"/>
<ellipse cx="280" cy="250" rx="52" ry="7" transform="rotate(-3 280 250)" fill="#7a1a0e" opacity="0.45"/>
<ellipse cx="360" cy="178" rx="14" ry="4" transform="rotate(-35 360 178)" fill="#f6b0a0" opacity="0.3"/>
<ellipse cx="235" cy="262" rx="16" ry="5" transform="rotate(-20 235 262)" fill="#f0a090" opacity="0.25"/>
</g></g>
<polygon points="300.0,112.7 306.6,118.0 314.6,130.0 330.6,126.0 335.9,146.0 357.2,148.6 374.5,144.6 373.2,162.0 370.5,175.2 381.2,176.6 382.5,190.0 389.2,197.9 386.5,205.8 397.1,218.0 379.8,230.6 393.2,240.0 385.2,245.3 386.5,254.6 375.8,258.6 381.2,269.3 373.2,283.9 359.9,285.2 359.9,294.5 347.9,291.9 354.5,305.2 337.2,301.2 336.4,321.2 322.0,333.6 311.6,324.5 299.2,328.4 289.5,321.9 283.0,324.5 273.2,319.3 255.0,332.3 249.1,320.6 245.2,300.4 233.9,299.9 217.9,303.9 208.6,299.9 210.0,283.9 195.3,285.2 202.0,273.2 207.3,258.6 196.6,253.3 179.3,250.6 179.3,240.0 193.3,219.2 192.0,206.7 197.5,198.3 190.6,188.6 193.3,170.6 198.9,160.8 214.0,147.3 216.6,126.0 240.5,144.6 249.9,124.6 263.2,130.0 287.0,118.0" fill="none" stroke="#d9a088" stroke-width="0.7" stroke-opacity=".7"/>
</svg><!-- /AST -->
<div class="t" style="left:10px;top:20px;color:#e8e8e8;text-shadow:0.6px 0.6px 0.6px #222">User Ortho</div>
<div class="a" style="left:0;top:25px;width:5px;height:7px;background:#3a3a3a;border-radius:0 2px 2px 0"></div>
<div class="a" style="left:1px;top:28px;width:3px;height:1px;background:#888"></div>
<div class="a" style="left:2px;top:27px;width:1px;height:3px;background:#888"></div>
<div class="a" style="left:566px;top:25.5px;width:6px;height:7px;background:#3e3e3e;border-radius:2px 0 0 2px"></div>
<div class="a" style="left:568px;top:28.5px;width:3px;height:1px;background:#888"></div>
<div class="a" style="left:569px;top:27.5px;width:1px;height:3px;background:#888"></div>
<div class="t" style="left:18px;top:409px;color:#f0f0f0;text-shadow:0.6px 0.6px 0.6px #111">(5) asteroid_01</div>
<svg class="a" style="left:0;top:398px" width="18" height="20">
 <line x1="5" y1="14" x2="4" y2="5" stroke="#3a8a4a" stroke-width="1.2" opacity=".6"/>
 <line x1="5" y1="14" x2="12" y2="12" stroke="#a03838" stroke-width="1.2" opacity=".6"/>
 <line x1="5" y1="14" x2="8" y2="10" stroke="#4050a0" stroke-width="1.2" opacity=".6"/>
</svg>
<svg class="a" style="left:518px;top:298px" width="26" height="26">
 <line x1="2" y1="13.3" x2="24" y2="13.3" stroke="#9a9a9a" stroke-width="0.8" opacity=".7"/>
 <line x1="12.3" y1="1.5" x2="12.3" y2="24" stroke="#9a9a9a" stroke-width="0.8" opacity=".7"/>
 <circle cx="12.3" cy="13.3" r="5.3" fill="none" stroke="#d8d8d8" stroke-width="1" stroke-dasharray="2.2 2"/>
 <circle cx="12.3" cy="13.3" r="5.3" fill="none" stroke="#8a3030" stroke-width="1" stroke-dasharray="2 2.2" stroke-dashoffset="2.2"/>
</svg>

<!-- ===== VIEWPORT HEADER CONTENT ===== -->
<div class="a" style="left:4px;top:420.5px;width:15px;height:10px;background:#3a3a3a;border-radius:2px"></div>
<svg class="a" style="left:5.5px;top:421.5px" width="9" height="9"><path d="M4.5 0.5 L8.3 2.5 L8.3 6.5 L4.5 8.5 L0.7 6.5 L0.7 2.5Z" fill="#d8d8d8"/><path d="M0.7 2.5 L4.5 4.5 L8.3 2.5 M4.5 4.5 L4.5 8.5" stroke="#888" stroke-width=".7" fill="none"/><path d="M4.5 4.5 L8.3 2.5 L8.3 6.5 L4.5 8.5Z" fill="#a8a8a8"/></svg>
<svg class="a" style="left:14.5px;top:421.8px" width="4" height="8"><path d="M0.4 3 L2 0.9 L3.6 3Z M0.4 4.6 L2 6.7 L3.6 4.6Z" fill="#ccc"/></svg>
<div class="t" style="left:25.5px;top:424px">View</div>
<div class="t" style="left:49.5px;top:424px">Select</div>
<div class="t" style="left:76.5px;top:424px">Add</div>
<div class="t" style="left:98.5px;top:424px">Object</div>
<div class="dd" style="left:123.5px;top:420.5px;width:62px;height:12px;background:#3c3c3c"></div>
<div class="a" style="left:126.5px;top:422px;width:7px;height:7px;border-radius:2px;background:radial-gradient(circle at 40% 40%,#ffd8a0,#e08a30 60%,#8a4a10)"></div>
<div class="t lt" style="left:136px;top:424px">Object Mode</div>
<svg class="a" style="left:180.5px;top:421.8px" width="4" height="8"><path d="M0.4 3 L2 0.9 L3.6 3Z M0.4 4.6 L2 6.7 L3.6 4.6Z" fill="#ccc"/></svg>
<div class="dd" style="left:187px;top:420.5px;width:18px;height:12px;background:#3c3c3c"></div>
<div class="a" style="left:189.5px;top:422.5px;width:7px;height:7px;border-radius:50%;background:radial-gradient(circle at 35% 35%,#fff,#ddd 50%,#888)"></div>
<svg class="a" style="left:200.0px;top:421.8px" width="4" height="8"><path d="M0.4 3 L2 0.9 L3.6 3Z M0.4 4.6 L2 6.7 L3.6 4.6Z" fill="#ccc"/></svg>
<div class="dd" style="left:208px;top:420.5px;width:17px;height:12px;background:#3c3c3c"></div>
<svg class="a" style="left:209.5px;top:422px" width="10" height="10"><circle cx="5" cy="5" r="3.6" fill="none" stroke="#9aa4b4" stroke-width="1" stroke-dasharray="1.3 1"/><circle cx="5" cy="5" r="1.2" fill="#c8d0dc"/></svg>
<svg class="a" style="left:220.0px;top:421.8px" width="4" height="8"><path d="M0.4 3 L2 0.9 L3.6 3Z M0.4 4.6 L2 6.7 L3.6 4.6Z" fill="#ccc"/></svg>
<div class="a" style="left:226px;top:420.5px;width:13px;height:12px;background:#b6bcc6;border-radius:2px 0 0 2px;border:0.6px solid #8a8e96"></div>
<svg class="a" style="left:227.5px;top:421.5px" width="10" height="10"><path d="M5 1 L5 9 M1 5 L9 5" stroke="#6a7890" stroke-width="1"/><circle cx="5" cy="5" r="3" fill="none" stroke="#7a88a0" stroke-width=".8" stroke-dasharray="1 1"/></svg>
<div class="a" style="left:239px;top:420.5px;width:10px;height:12px;background:#b4b4b4;border:0.6px solid #8a8a8a;border-left:none"></div>
<svg class="a" style="left:239.5px;top:421px" width="9" height="11"><path d="M3.5 9 L3.5 1.5" stroke="#5a9a4a" stroke-width="1.3"/><path d="M3.5 9 L8.5 9" stroke="#c04a40" stroke-width="1.3"/><path d="M3.5 9 L7 5" stroke="#5070c0" stroke-width="1.2"/><path d="M1 10 L3.5 9" stroke="#d0a050" stroke-width="1"/></svg>
<div class="dd" style="left:248px;top:420.5px;width:40px;height:12px;background:#3c3c3c;border-radius:0 2px 2px 0"></div>
<div class="t lt" style="left:253px;top:424px">Global</div>
<svg class="a" style="left:283.0px;top:421.8px" width="4" height="8"><path d="M0.4 3 L2 0.9 L3.6 3Z M0.4 4.6 L2 6.7 L3.6 4.6Z" fill="#ccc"/></svg>
<div class="a" style="left:291px;top:420.5px;width:25.5px;height:11.5px;background:#bebebe"></div><div class="a" style="left:296px;top:420.5px;width:1px;height:11.5px;background:#acacac"></div><div class="a" style="left:301px;top:420.5px;width:1px;height:11.5px;background:#acacac"></div><div class="a" style="left:306px;top:420.5px;width:1px;height:11.5px;background:#acacac"></div><div class="a" style="left:311px;top:420.5px;width:1px;height:11.5px;background:#acacac"></div><div class="a" style="left:291px;top:426px;width:25.5px;height:1px;background:#acacac"></div><div class="a" style="left:320px;top:420.5px;width:25.5px;height:11.5px;background:#bebebe"></div><div class="a" style="left:325px;top:420.5px;width:1px;height:11.5px;background:#acacac"></div><div class="a" style="left:330px;top:420.5px;width:1px;height:11.5px;background:#acacac"></div><div class="a" style="left:335px;top:420.5px;width:1px;height:11.5px;background:#acacac"></div><div class="a" style="left:340px;top:420.5px;width:1px;height:11.5px;background:#acacac"></div><div class="a" style="left:320px;top:426px;width:25.5px;height:1px;background:#acacac"></div>
<div class="a" style="left:291.8px;top:421.3px;width:3px;height:3px;border-radius:50%;background:#6a7a88"></div>
<div class="a" style="left:348px;top:420.5px;width:10px;height:11.5px;background:#7a96c8;border-radius:1.5px"></div>
<div class="a" style="left:349.5px;top:422px;width:5px;height:7px;background:#e0e8f6;border:0.6px solid #3a4a6a"></div>
<div class="a" style="left:355px;top:425px;width:2px;height:5px;background:#2a3450"></div>
<div class="a" style="left:361px;top:421.5px;width:10px;height:10px;border-radius:50%;background:#b8b8b8;border:1px solid #9a9a9a"></div>
<div class="a" style="left:374px;top:421.5px;width:9px;height:10px;border-radius:50%;background:#b4b4b4;border:1px dotted #888"></div>
<div class="dd" style="left:383px;top:420.5px;width:18px;height:12px;background:#3a3a3a"></div>
<div class="a" style="left:385.5px;top:426px;width:9px;height:1.2px;background:#e0e8f8"></div>
<div class="a" style="left:389.5px;top:422px;width:1.2px;height:9px;background:#e0e8f8"></div>
<svg class="a" style="left:396.0px;top:421.8px" width="4" height="8"><path d="M0.4 3 L2 0.9 L3.6 3Z M0.4 4.6 L2 6.7 L3.6 4.6Z" fill="#ccc"/></svg>
<div class="a" style="left:403px;top:421px;width:10px;height:10px;border-radius:3px;background:#b0b4b8;border:1px solid #8a9098"></div>
<div class="a" style="left:415px;top:422px;width:9px;height:8px;background:linear-gradient(#d8c890,#3a2a20);border-radius:1px"></div>
<div class="a" style="left:426px;top:422px;width:9px;height:8px;background:linear-gradient(#f0f0f0 0 30%,#2a2a2a 30%);border-radius:1px"></div>

<!-- outliner -->
<div class="a" id="ol" style="left:574px;top:13px;width:194px;height:115px;background:#aeaeae"></div>
<div class="a" style="left:574px;top:128px;width:194px;height:1px;background:#8c8c8c"></div>

<!-- ===== OUTLINER CONTENT ===== -->
<div class="a" style="left:574px;top:13px;width:194px;height:16.35px;background:#b3b3b3"></div>
<div class="a" style="left:572px;top:12.5px;width:196px;height:1px;background:#8e8e8e"></div>
<div class="a" style="left:574px;top:29.35px;width:194px;height:9.85px;background:#b3b3b3"></div>
<div class="a" style="left:574px;top:49.05px;width:194px;height:9.85px;background:#b3b3b3"></div>
<div class="a" style="left:574px;top:68.75px;width:194px;height:9.85px;background:#b3b3b3"></div>
<div class="a" style="left:574px;top:88.45px;width:194px;height:9.85px;background:#b3b3b3"></div>
<div class="a" style="left:574px;top:108.15px;width:194px;height:9.85px;background:#b3b3b3"></div>
<div class="a" style="left:574px;top:127.85px;width:194px;height:0.15px;background:#b5b5b5"></div>
<div class="a" style="left:737.5px;top:27px;width:0.5px;height:101px;background:#a4a4a4"></div>
<div class="a" style="left:742px;top:27px;width:0.5px;height:101px;background:#a8a8a8"></div>
<div class="a" style="left:751px;top:27px;width:0.5px;height:101px;background:#a4a4a4"></div>
<div class="a" style="left:755.5px;top:27px;width:0.5px;height:101px;background:#a8a8a8"></div>
<div class="a" style="left:759.5px;top:27px;width:0.5px;height:101px;background:#a4a4a4"></div>

<div class="a" style="left:578px;top:15.5px;width:15px;height:10px;background:#2c2c2c;border-radius:2px"></div>
<div class="a" style="left:580px;top:17px;width:3px;height:1.2px;background:#e0d8a0"></div>
<div class="a" style="left:580px;top:20px;width:1.2px;height:4px;background:#ddd"></div>
<div class="a" style="left:582px;top:20px;width:5px;height:1.2px;background:#ddd"></div>
<div class="a" style="left:582px;top:23px;width:5px;height:1.2px;background:#ddd"></div>
<svg class="a" style="left:588.5px;top:16.8px" width="4" height="8"><path d="M0.4 3 L2 0.9 L3.6 3Z M0.4 4.6 L2 6.7 L3.6 4.6Z" fill="#9c9"/></svg>
<div class="t" style="left:599.5px;top:18.5px">View</div>
<div class="t" style="left:624px;top:18.5px">Search</div>
<div class="dd" style="left:650.5px;top:15.5px;width:66px;height:10px;background:#3a3a3a"></div>
<div class="t lt" style="left:653.5px;top:18.5px">Visible Layers</div>
<svg class="a" style="left:712.0px;top:16.8px" width="4" height="8"><path d="M0.4 3 L2 0.9 L3.6 3Z M0.4 4.6 L2 6.7 L3.6 4.6Z" fill="#ccc"/></svg>
<div class="a" style="left:720px;top:15.5px;width:48px;height:10px;background:#2a2a2a;border-radius:2px 0 0 2px"></div>
<svg class="a" style="left:721px;top:16px" width="10" height="10"><circle cx="6.5" cy="3.5" r="2" fill="none" stroke="#ddd" stroke-width="1.1"/><line x1="5" y1="5" x2="1.5" y2="8.5" stroke="#ddd" stroke-width="1.1"/></svg>

<div class="a" style="left:576.5px;top:30.5px;width:3.5px;height:4px;border:0.7px solid #555;background:#ddd"></div>
<div class="a" style="left:580px;top:32.5px;width:5px;height:0.6px;border-top:0.7px dotted #777"></div>
<svg class="a" style="left:585px;top:28.5px" width="9" height="10"><path d="M0.5 1 L8.5 1 L4.5 9 Z" fill="#f0a040" stroke="#b06010" stroke-width="0.7"/><path d="M2.5 3 L6.5 3 L4.5 6.5Z" fill="#ffd090"/></svg>
<div class="t" style="left:595px;top:31px;color:#f8f8f8">asteroid_01</div>
<div class="a" style="left:633px;top:30px;width:0.7px;height:7px;background:#888"></div>
<svg class="a" style="left:638.5px;top:28.5px" width="20" height="11"><circle cx="2.5" cy="2.5" r="1.4" fill="none" stroke="#666" stroke-width="0.9"/><circle cx="6.5" cy="2.5" r="1.4" fill="none" stroke="#666" stroke-width="0.9"/><line x1="4.5" y1="4" x2="4.5" y2="9" stroke="#777" stroke-width="1"/><path d="M11 9 L17 3" stroke="#3a70b8" stroke-width="2.4"/><path d="M15.5 2 L18 0.8" stroke="#444" stroke-width="1.2"/></svg>
<svg class="a" style="left:739px;top:29px" width="28" height="9"><path d="M0.5 4.5 Q3.5 0.5 7 4.5 Q3.5 7.5 0.5 4.5Z" fill="none" stroke="#444" stroke-width="0.8"/><circle cx="3.8" cy="4.3" r="1.2" fill="#333"/><path d="M11.5 1 L11.5 8 L13 6.5 L14.5 8.5 L15.3 8 L14 6 L16 6Z" fill="#fafafa" stroke="#222" stroke-width="0.6"/><rect x="20.5" y="1.5" width="6.5" height="6.5" fill="#333" stroke="#222" stroke-width="0.5"/><rect x="22" y="3" width="3.5" height="3.5" fill="#ddd"/></svg>

<!-- properties -->
<div class="a" id="pr" style="left:574px;top:129px;width:194px;height:242px;background:#9d9d9d"></div>

<!-- ===== PROPERTIES CONTENT ===== -->
<div class="a" style="left:574px;top:129px;width:194px;height:13.5px;background:#a6a6a6"></div>
<div class="a" style="left:578.5px;top:131.5px;width:14.5px;height:9px;background:#2c2c2c;border-radius:2px"></div>
<div class="a" style="left:580px;top:133.5px;width:7.5px;height:2px;background:#ddd"></div>
<div class="a" style="left:580px;top:137px;width:7.5px;height:2px;background:#ddd"></div>
<svg class="a" style="left:588.5px;top:132.8px" width="4" height="8"><path d="M0.4 3 L2 0.9 L3.6 3Z M0.4 4.6 L2 6.7 L3.6 4.6Z" fill="#aaa"/></svg>
<div class="a" style="left:598px;top:131.5px;width:124px;height:9px;background:#3a3a3a;border-radius:2px"></div>
<svg class="a" style="left:598px;top:131.5px" width="124" height="9">
 <rect x="1" y="2" width="6.5" height="5" fill="#3e3e3e" stroke="#8a8a8a" stroke-width=".7"/><rect x="2.5" y="3.5" width="2" height="2" fill="#999"/>
 <rect x="10" y="1" width="5" height="5" fill="#666" stroke="#777" stroke-width=".5"/><rect x="12" y="3" width="5" height="5" fill="#7a7a7a" stroke="#8a8a8a" stroke-width=".5"/>
 <circle cx="22.5" cy="2.5" r="1.5" fill="#ddd"/><circle cx="24" cy="6" r="1.5" fill="#999"/><rect x="25.5" y="2" width="1.5" height="5" fill="#6a7a90"/>
 <circle cx="35" cy="4.5" r="3.5" fill="#50687a"/><circle cx="34" cy="3.5" r="1.3" fill="#8aa0b0"/>
 <circle cx="45.6" cy="4.5" r="3.5" fill="#b07040"/><circle cx="44.6" cy="3.5" r="1.4" fill="#e8b080"/>
 <path d="M53 6.5 L57 2.5 M55 1.8 Q58.5 0.8 59 3.5 M52.5 5 Q51.5 7.5 54.5 7.5" stroke="#b0b0b0" stroke-width="1" fill="none"/>
 <path d="M63.5 7.5 L68 3 M67 1.5 L69.5 1.5 L70 3.5" stroke="#b0b0b0" stroke-width="1.1" fill="none"/>
 <path d="M74.5 1.5 L81 1.5 L77.8 7.5Z" fill="none" stroke="#9a9a9a" stroke-width=".8"/>
 <circle cx="87.6" cy="4.5" r="3.5" fill="#807478"/><circle cx="86.6" cy="3.5" r="1.3" fill="#c0b0b0"/>
 <rect x="93.4" y="-0.5" width="9.2" height="10" fill="#5a80c0" rx="1.5"/>
 <rect x="95.3" y="1.7" width="5.5" height="5.5" fill="#fff"/><rect x="95.3" y="1.7" width="1.8" height="1.8" fill="#d04020"/><rect x="99" y="1.7" width="1.8" height="1.8" fill="#d04020"/><rect x="97.1" y="3.5" width="1.9" height="1.9" fill="#d04020"/><rect x="95.3" y="5.4" width="1.8" height="1.8" fill="#d04020"/><rect x="99" y="5.4" width="1.8" height="1.8" fill="#d04020"/>
 <path d="M105 4.5 L113 4.5 M109 0.8 L109 8.2" stroke="#7a7060" stroke-width=".7"/><circle cx="106.5" cy="2.3" r=".8" fill="#a89870"/><circle cx="111.5" cy="6.7" r=".8" fill="#a89870"/><circle cx="111.5" cy="2.3" r=".8" fill="#8a8068"/><circle cx="106.5" cy="6.7" r=".8" fill="#8a8068"/>
 <path d="M115.5 7.5 L118.5 4.5 L120 6 L122.5 1.5" stroke="#8a9aaa" stroke-width="1" fill="none"/><circle cx="121.5" cy="2.2" r="1.1" fill="#b8c4d0"/>
</svg>
<div class="a" style="left:574px;top:142.5px;width:194px;height:1px;background:#939393"></div>

<div class="a" style="left:578.5px;top:146px;width:14.5px;height:9.5px;background:#3a3a3a;border-radius:2px 0 0 2px"></div>
<svg class="a" style="left:580px;top:147.5px" width="7" height="7"><rect width="6.5" height="6.5" fill="#f4f0f0"/><rect x="0" y="0" width="2.2" height="2.2" fill="#c03028"/><rect x="4.3" y="0" width="2.2" height="2.2" fill="#c03028"/><rect x="2.2" y="2.2" width="2.1" height="2.1" fill="#c03028"/><rect x="0" y="4.3" width="2.2" height="2.2" fill="#c03028"/><rect x="4.3" y="4.3" width="2.2" height="2.2" fill="#c03028"/></svg>
<svg class="a" style="left:588.5px;top:147.3px" width="4" height="8"><path d="M0.4 3 L2 0.9 L3.6 3Z M0.4 4.6 L2 6.7 L3.6 4.6Z" fill="#9c9"/></svg>
<div class="a" style="left:593px;top:146px;width:68px;height:9.5px;background:#2e2e2e"></div>
<div class="t lt" style="left:597px;top:148.5px">displacement_textu...</div>
<div class="a" style="left:661px;top:146px;width:10.5px;height:9.5px;background:#bdbdbd"></div>
<div class="t" style="left:664px;top:148.5px;color:#222">F</div>
<div class="a" style="left:672px;top:146px;width:20px;height:9.5px;background:#d6d6d6;border-radius:0 2px 2px 0"></div>
<svg class="a" style="left:674px;top:147.3px" width="7" height="7"><path d="M3.5 0.5 L3.5 6.5 M0.5 3.5 L6.5 3.5" stroke="#6a6a6a" stroke-width="1.3"/><path d="M2.3 1.4 L3.5 0.2 L4.7 1.4 M2.3 5.6 L3.5 6.8 L4.7 5.6 M1.4 2.3 L0.2 3.5 L1.4 4.7 M5.6 2.3 L6.8 3.5 L5.6 4.7" stroke="#6a6a6a" stroke-width=".8" fill="none"/></svg>
<svg class="a" style="left:683px;top:147.3px" width="7" height="7"><path d="M1.5 1.5 L5.5 5.5 M5.5 1.5 L1.5 5.5" stroke="#6a6a6a" stroke-width="1.2"/><circle cx="1.3" cy="1.3" r="1" fill="none" stroke="#6a6a6a" stroke-width=".7"/><circle cx="5.7" cy="1.3" r="1" fill="none" stroke="#6a6a6a" stroke-width=".7"/><circle cx="1.3" cy="5.7" r="1" fill="none" stroke="#6a6a6a" stroke-width=".7"/><circle cx="5.7" cy="5.7" r="1" fill="none" stroke="#6a6a6a" stroke-width=".7"/></svg>

<div class="t" style="left:581.5px;top:161.5px">Type:</div>
<div class="dd" style="left:616.5px;top:159px;width:138px;height:9.5px;background:#3c3c3c"></div>
<svg class="a" style="left:619px;top:160.5px" width="7" height="7"><rect width="6.5" height="6.5" fill="#f4f0f0"/><rect x="0" y="0" width="2.2" height="2.2" fill="#c03028"/><rect x="4.3" y="0" width="2.2" height="2.2" fill="#c03028"/><rect x="2.2" y="2.2" width="2.1" height="2.1" fill="#c03028"/><rect x="0" y="4.3" width="2.2" height="2.2" fill="#c03028"/><rect x="4.3" y="4.3" width="2.2" height="2.2" fill="#c03028"/></svg>
<div class="t lt" style="left:628px;top:161.5px">Clouds</div>
<svg class="a" style="left:750.0px;top:160.3px" width="4" height="8"><path d="M0.4 3 L2 0.9 L3.6 3Z M0.4 4.6 L2 6.7 L3.6 4.6Z" fill="#ccc"/></svg>

<!-- Preview panel -->
<div class="a" style="left:574px;top:171.5px;width:185px;height:12.5px;background:#c4c4c4"></div>
<svg class="a" style="left:579.5px;top:177px" width="6" height="5"><path d="M0.3 0.5 L4.5 0.5 L2.4 4.2Z" fill="#222"/></svg>
<div class="t" style="left:586px;top:176.5px;color:#1a1a1a">Preview</div>
<div class="a" style="left:574px;top:184px;width:185px;height:69.5px;background:#9b9b9b"></div>
<svg class="a" id="prev" style="left:577px;top:188.5px" width="178" height="58.5"><filter id="nz" x="0" y="0" width="100%" height="100%" color-interpolation-filters="sRGB"><feTurbulence type="fractalNoise" baseFrequency="0.2" numOctaves="3" seed="4"/><feColorMatrix type="matrix" values="0.85 0 0 0 0.29  0.85 0 0 0 0.29  0.85 0 0 0 0.29  0 0 0 0 1"/><feGaussianBlur stdDeviation="0.75"/></filter><rect width="178" height="58.5" fill="#000" filter="url(#nz)"/></svg>
<div class="a" style="left:660px;top:248px;width:10px;height:1px;background:#777"></div>

<!-- Colors / Clouds headers -->
<div class="a" style="left:574px;top:253.5px;width:185px;height:24.5px;background:#c4c4c4"></div>
<div class="a" style="left:574px;top:273.5px;width:185px;height:0.7px;background:#cbcbcb"></div>
<svg class="a" style="left:579.3px;top:258.3px" width="5" height="6"><path d="M0.3 0.3 L4.3 2.4 L0.3 4.5Z" fill="#222"/></svg>
<div class="t" style="left:586px;top:258px;color:#1a1a1a">Colors</div>
<svg class="a" style="left:579.5px;top:270.3px" width="6" height="5"><path d="M0.3 0.5 L4.6 0.5 L2.45 4.4Z" fill="#222"/></svg>
<div class="t" style="left:586px;top:270px;color:#1a1a1a">Clouds</div>

<div class="a" style="left:574px;top:278px;width:185px;height:80px;background:#9b9b9b"></div>
<div class="a" style="left:577.5px;top:282px;width:88.5px;height:10.5px;background:#5680c2;border-radius:2px 0 0 2px"></div>
<div class="a" style="left:666px;top:282px;width:88.5px;height:10.5px;background:#484848;border-radius:0 2px 2px 0"></div>
<div class="t" style="left:608px;top:285px;color:#f4f4f4">Grayscale</div>
<div class="t" style="left:702px;top:285px;color:#eee">Color</div>
<div class="t" style="left:581.5px;top:298px">Noise:</div>
<div class="a" style="left:577.5px;top:308px;width:88.5px;height:10px;background:#5680c2;border-radius:2px 0 0 2px"></div>
<div class="a" style="left:666px;top:308px;width:88.5px;height:10px;background:#484848;border-radius:0 2px 2px 0"></div>
<div class="t" style="left:616px;top:310.5px;color:#f4f4f4">Soft</div>
<div class="t" style="left:703px;top:310.5px;color:#eee">Hard</div>
<div class="t" style="left:581.5px;top:324px">Basis:</div>
<div class="dd" style="left:639px;top:321px;width:115.5px;height:9.5px;background:#3c3c3c"></div>
<div class="t lt" style="left:642.5px;top:323.5px">Blender Original</div>
<svg class="a" style="left:750.0px;top:322.3px" width="4" height="8"><path d="M0.4 3 L2 0.9 L3.6 3Z M0.4 4.6 L2 6.7 L3.6 4.6Z" fill="#ccc"/></svg>
<div class="a" style="left:578px;top:334.5px;width:86px;height:9.5px;background:#5680c2;border-radius:5px"></div>
<div class="t" style="left:586px;top:336.5px;color:#f0f0f0">Size:</div>
<div class="t" style="left:643px;top:336.5px;color:#f0f0f0">0.16</div>
<div class="a" style="left:669.5px;top:334.5px;width:85px;height:9.5px;background:#d4d4d4;border-radius:5px"></div>
<div class="t" style="left:677.5px;top:336.5px">Nabla:</div>
<div class="t" style="left:732.5px;top:336.5px">0.03</div>
<div class="a" style="left:578px;top:345px;width:86px;height:9.5px;background:#d4d4d4;border-radius:5px"></div>
<div class="t" style="left:586px;top:347px">Depth:</div>
<div class="t" style="left:650.5px;top:347px">2</div>
<svg class="a" style="left:631px;top:337px" width="6" height="9"><path d="M0.5 0.5 L0.5 7 L2 5.5 L3.3 8 L4.2 7.6 L3 5 L5 5Z" fill="#fff" stroke="#222" stroke-width="0.6"/></svg>

<svg class="a" style="left:580.5px;top:337px" width="4" height="5"><path d="M3 0.5 L0.8 2.25 L3 4" fill="none" stroke="#88a4d4" stroke-width="0.6"/></svg><svg class="a" style="left:659.5px;top:337px" width="4" height="5"><path d="M0.8 0.5 L3 2.25 L0.8 4" fill="none" stroke="#88a4d4" stroke-width="0.6"/></svg><svg class="a" style="left:672px;top:337px" width="4" height="5"><path d="M3 0.5 L0.8 2.25 L3 4" fill="none" stroke="#b4b4b4" stroke-width="0.6"/></svg><svg class="a" style="left:750.5px;top:337px" width="4" height="5"><path d="M0.8 0.5 L3 2.25 L0.8 4" fill="none" stroke="#b4b4b4" stroke-width="0.6"/></svg><svg class="a" style="left:580.5px;top:347.5px" width="4" height="5"><path d="M3 0.5 L0.8 2.25 L3 4" fill="none" stroke="#b4b4b4" stroke-width="0.6"/></svg><svg class="a" style="left:659.5px;top:347.5px" width="4" height="5"><path d="M0.8 0.5 L3 2.25 L0.8 4" fill="none" stroke="#b4b4b4" stroke-width="0.6"/></svg>
<!-- Custom properties -->
<div class="a" style="left:574px;top:358.5px;width:185px;height:12px;background:#c4c4c4"></div>
<svg class="a" style="left:579.3px;top:362.8px" width="5" height="6"><path d="M0.3 0.3 L4.3 2.4 L0.3 4.5Z" fill="#222"/></svg>
<div class="t" style="left:586px;top:362.5px;color:#1a1a1a">Custom Properties</div>


<div class="a" style="left:746px;top:177px;width:10px;height:0.7px;background:#d4d4d4;opacity:.45"></div><div class="a" style="left:746px;top:179px;width:10px;height:0.7px;background:#d4d4d4;opacity:.45"></div><div class="a" style="left:746px;top:259px;width:10px;height:0.7px;background:#d4d4d4;opacity:.45"></div><div class="a" style="left:746px;top:261px;width:10px;height:0.7px;background:#d4d4d4;opacity:.45"></div><div class="a" style="left:746px;top:271px;width:10px;height:0.7px;background:#d4d4d4;opacity:.45"></div><div class="a" style="left:746px;top:273px;width:10px;height:0.7px;background:#d4d4d4;opacity:.45"></div><div class="a" style="left:746px;top:363.5px;width:10px;height:0.7px;background:#d4d4d4;opacity:.45"></div><div class="a" style="left:746px;top:365.5px;width:10px;height:0.7px;background:#d4d4d4;opacity:.45"></div>
<!-- scrollbar -->
<div class="a" style="left:760px;top:177.5px;width:7px;height:193px;background:#a8a8a8;border:1px solid #bababa;border-radius:3.5px"></div>

<div class="a" style="left:751px;top:428px;width:5px;height:1px;background:#5a5a5c"></div><div class="a" style="left:753px;top:426px;width:1px;height:5px;background:#5a5a5c"></div>
<svg class="a" style="left:760px;top:371px" width="8" height="8"><path d="M1 0 L8 7 M4 0 L8 4 M7 0 L8 1" stroke="#555" stroke-width="1"/></svg>
</body></html>
